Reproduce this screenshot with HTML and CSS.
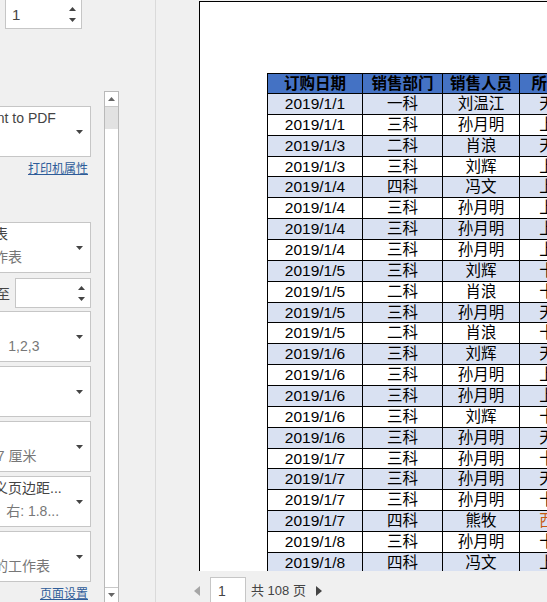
FILE: index.html
```html
<!DOCTYPE html>
<html lang="zh-CN">
<head>
<meta charset="UTF-8">
<title>打印预览</title>
<link rel="stylesheet" href="styles.css">
</head>
<body>
<div class="app">
  <aside class="settings">
    <div class="settings-body">
      <div class="settings-inner">
        <div class="copies-row">
          <span class="label">份数:</span>
          <div class="spin spin-copies">
            <span class="spin-value">1</span>
            <span class="spin-arrows">
              <svg width="7" height="4" viewBox="0 0 7 4"><path d="M0 4h7L3.5 0z"/></svg>
              <svg width="7" height="4" viewBox="0 0 7 4"><path d="M0 0h7L3.5 4z"/></svg>
            </span>
          </div>
        </div>

        <div class="dropdown dropdown-printer">
          <div class="dd-text">
            <span class="dd-title">Microsoft Print to PDF</span>
            <span class="dd-sub">就绪</span>
          </div>
          <svg class="dd-arrow" width="7" height="4" viewBox="0 0 7 4"><path d="M0 0h7L3.5 4z"/></svg>
        </div>
        <div class="link-row"><a href="#">打印机属性</a></div>

        <div class="dropdown dropdown-first">
          <div class="dd-text">
            <span class="dd-title">打印活动工作表</span>
            <span class="dd-sub">仅打印活动工作表</span>
          </div>
          <svg class="dd-arrow" width="7" height="4" viewBox="0 0 7 4"><path d="M0 0h7L3.5 4z"/></svg>
        </div>

        <div class="range-row">
          <span class="label">页数:</span>
          <div class="spin spin-small"></div>
          <span class="label range-to">至</span>
          <div class="spin spin-range">
            <span class="spin-value"></span>
            <span class="spin-arrows">
              <svg width="7" height="4" viewBox="0 0 7 4"><path d="M0 4h7L3.5 0z"/></svg>
              <svg width="7" height="4" viewBox="0 0 7 4"><path d="M0 0h7L3.5 4z"/></svg>
            </span>
          </div>
        </div>

        <div class="dropdown">
          <div class="dd-text">
            <span class="dd-title">对照</span>
            <span class="dd-sub"><span class="collate">1,2,3</span><span class="collate">1,2,3</span><span class="collate">1,2,3</span></span>
          </div>
          <svg class="dd-arrow" width="7" height="4" viewBox="0 0 7 4"><path d="M0 0h7L3.5 4z"/></svg>
        </div>

        <div class="dropdown">
          <div class="dd-text">
            <span class="dd-title">纵向</span>
            <span class="dd-sub"></span>
          </div>
          <svg class="dd-arrow" width="7" height="4" viewBox="0 0 7 4"><path d="M0 0h7L3.5 4z"/></svg>
        </div>

        <div class="dropdown">
          <div class="dd-text">
            <span class="dd-title">A4</span>
            <span class="dd-sub paper-size">21 厘米 x 29.7 厘米</span>
          </div>
          <svg class="dd-arrow" width="7" height="4" viewBox="0 0 7 4"><path d="M0 0h7L3.5 4z"/></svg>
        </div>

        <div class="dropdown">
          <div class="dd-text">
            <span class="dd-title">上一次的自定义页边距...</span>
            <span class="dd-sub">左: 1.8 厘米<span class="gap"></span>右: 1.8...</span>
          </div>
          <svg class="dd-arrow" width="7" height="4" viewBox="0 0 7 4"><path d="M0 0h7L3.5 4z"/></svg>
        </div>

        <div class="dropdown">
          <div class="dd-text">
            <span class="dd-title">无缩放</span>
            <span class="dd-sub">打印实际大小的工作表</span>
          </div>
          <svg class="dd-arrow" width="7" height="4" viewBox="0 0 7 4"><path d="M0 0h7L3.5 4z"/></svg>
        </div>
        <div class="link-row"><a href="#">页面设置</a></div>
      </div>
    </div>

    <div class="scrollbar">
      <div class="sb-btn">
        <svg width="7" height="4" viewBox="0 0 7 4"><path d="M0 4h7L3.5 0z"/></svg>
      </div>
      <div class="sb-thumb"></div>
      <div class="sb-track"></div>
      <div class="sb-btn sb-btn-down">
        <svg width="7" height="4" viewBox="0 0 7 4"><path d="M0 0h7L3.5 4z"/></svg>
      </div>
    </div>
  </aside>

  <section class="preview">
    <div class="viewport">
      <div class="page">
        <table class="sheet">
          <colgroup><col class="c1"><col class="c2"><col class="c3"><col class="c4"></colgroup>
          <thead>
            <tr><th>订购日期</th><th>销售部门</th><th>销售人员</th><th>所属区域</th></tr>
          </thead>
          <tbody>
            <tr><td>2019/1/1</td><td>一科</td><td>刘温江</td><td>天津市</td></tr>
            <tr><td>2019/1/1</td><td>三科</td><td>孙月明</td><td>上海市</td></tr>
            <tr><td>2019/1/3</td><td>二科</td><td>肖浪</td><td>天津市</td></tr>
            <tr><td>2019/1/3</td><td>三科</td><td>刘辉</td><td>上海市</td></tr>
            <tr><td>2019/1/4</td><td>四科</td><td>冯文</td><td>上海市</td></tr>
            <tr><td>2019/1/4</td><td>三科</td><td>孙月明</td><td>上海市</td></tr>
            <tr><td>2019/1/4</td><td>三科</td><td>孙月明</td><td>上海市</td></tr>
            <tr><td>2019/1/4</td><td>三科</td><td>孙月明</td><td>上海市</td></tr>
            <tr><td>2019/1/5</td><td>三科</td><td>刘辉</td><td>十堰市</td></tr>
            <tr><td>2019/1/5</td><td>二科</td><td>肖浪</td><td>十堰市</td></tr>
            <tr><td>2019/1/5</td><td>三科</td><td>孙月明</td><td>天津市</td></tr>
            <tr><td>2019/1/5</td><td>二科</td><td>肖浪</td><td>十堰市</td></tr>
            <tr><td>2019/1/6</td><td>三科</td><td>刘辉</td><td>天津市</td></tr>
            <tr><td>2019/1/6</td><td>三科</td><td>孙月明</td><td>上海市</td></tr>
            <tr><td>2019/1/6</td><td>三科</td><td>孙月明</td><td>上海市</td></tr>
            <tr><td>2019/1/6</td><td>三科</td><td>刘辉</td><td>十堰市</td></tr>
            <tr><td>2019/1/6</td><td>三科</td><td>孙月明</td><td>天津市</td></tr>
            <tr><td>2019/1/7</td><td>三科</td><td>孙月明</td><td>十堰市</td></tr>
            <tr><td>2019/1/7</td><td>三科</td><td>孙月明</td><td>天津市</td></tr>
            <tr><td>2019/1/7</td><td>三科</td><td>孙月明</td><td>十堰市</td></tr>
            <tr><td>2019/1/7</td><td>四科</td><td>熊牧</td><td class="warn">西安市</td></tr>
            <tr><td>2019/1/8</td><td>三科</td><td>孙月明</td><td>十堰市</td></tr>
            <tr><td>2019/1/8</td><td>四科</td><td>冯文</td><td>上海市</td></tr>
          </tbody>
        </table>
      </div>
    </div>
    <div class="pager">
      <svg class="pg-prev" width="6" height="10" viewBox="0 0 6 10"><path d="M6 0v10L0 5z"/></svg>
      <div class="pg-input">1</div>
      <span class="pg-total">共 108 页</span>
      <svg class="pg-next" width="6" height="10" viewBox="0 0 6 10"><path d="M0 0v10l6-5z"/></svg>
    </div>
  </section>
</div>
</body>
</html>
```

FILE: styles.css
```css
body { margin:0; font-family:"Liberation Sans","Noto Sans CJK SC",sans-serif; background:#f0f0f0; overflow:hidden; }
.app { display:flex; width:547px; height:602px; overflow:hidden; }

/* 左侧打印设置 */
.settings { width:155px; flex:none; display:flex; border-right:1px solid #dadada; background:#f0f0f0; }
.settings-body { width:104px; flex:none; overflow:hidden; }
.settings-inner { width:241px; margin-left:-150px; font-size:14px; color:#444; }
.label { color:#444; white-space:nowrap; }

.copies-row { display:flex; justify-content:flex-end; align-items:center; gap:8px; height:30px; margin-top:-1px; padding-right:9px; }
.spin { box-sizing:border-box; height:30px; background:#fff; border:1px solid #c6c6c6; display:flex; align-items:center; }
.spin-copies { width:77px; }
.spin-value { flex:1; padding-left:6px; font-size:15px; color:#444; }
.spin-arrows { display:flex; flex-direction:column; gap:7px; padding-right:5px; }
.spin-arrows svg, .dd-arrow, .sb-btn svg { fill:#444; display:block; }

.dropdown { box-sizing:border-box; height:51px; margin-top:4px; background:#fff; border:1px solid #c6c6c6; display:flex; align-items:flex-start; padding-left:59px; }
.dropdown-printer { margin-top:77px; padding-left:68px; }
.dropdown-first { margin-top:41px; }
.dd-text { width:152px; flex:none; display:flex; flex-direction:column; line-height:23px; white-space:nowrap; overflow:hidden; }
.dropdown-printer .dd-text { width:150px; }
.dd-title { color:#444; height:23px; }
.dd-sub { color:#777; height:23px; }
.dd-sub.paper-size { padding-left:5px; }
.dd-arrow { margin:23px 7px 0 auto; }
.collate + .collate { margin-left:18px; }
.gap { display:inline-block; width:23px; }

.link-row { height:24px; line-height:24px; text-align:right; padding-right:3px; font-size:12px; }
.link-row a { color:#2e5c99; text-decoration:underline; }

.range-row { display:flex; justify-content:flex-end; align-items:center; height:30px; margin-top:5px; margin-bottom:-1px; }
.spin-small { width:60px; margin:0 8px; }
.range-to { margin-right:5px; }
.spin-range { width:76px; }

/* 滚动条 */
.scrollbar { width:15px; height:512px; margin-top:91px; box-sizing:border-box; border:1px solid #b9b9b9; background:#fff; display:flex; flex-direction:column; }
.sb-btn { height:14px; flex:none; display:flex; align-items:center; justify-content:center; border-bottom:1px solid #c8c8c8; }
.sb-btn svg { fill:#666; }
.sb-btn-down { border-bottom:none; border-top:1px solid #c8c8c8; }
.sb-thumb { height:22px; flex:none; background:#e2e2e2; }
.sb-track { flex:1; }

/* 右侧预览 */
.preview { flex:1; display:flex; flex-direction:column; min-width:0; }
.viewport { height:571px; flex:none; overflow:hidden; padding:1px 0 0 43px; box-sizing:border-box; }
.page { width:600px; height:700px; background:#fff; border-left:1px solid #000; border-top:1px solid #000; padding:71px 0 0 67px; box-sizing:border-box; }

.sheet { border-collapse:collapse; table-layout:fixed; font-size:15.5px; color:#000; }
.sheet .c1 { width:95px; } .sheet .c2 { width:80px; } .sheet .c3 { width:77px; } .sheet .c4 { width:86px; }
.sheet th, .sheet td { border:1px solid #000; padding:0; text-align:center; white-space:nowrap; overflow:hidden; line-height:18px; }
.sheet thead tr { height:20px; }
.sheet th { background:#4472c4; font-weight:bold; }
.sheet tbody tr { height:20.86px; }
.sheet tbody tr:nth-child(odd) { background:#d9e1f2; }
.sheet td.warn { color:#c65911; }

.pager { height:31px; flex:none; display:flex; align-items:flex-start; padding:6px 0 0 38px; box-sizing:border-box; font-size:13px; color:#444; overflow:hidden; }
.pg-prev { fill:#a6a6a6; margin-top:9px; }
.pg-input { box-sizing:border-box; width:36px; height:28px; margin-left:10px; background:#fff; border:1px solid #c6c6c6; padding-left:7px; line-height:26px; font-size:14px; }
.pg-total { margin-left:5px; line-height:28px; }
.pg-next { fill:#444; margin:9px 0 0 10px; }
```
